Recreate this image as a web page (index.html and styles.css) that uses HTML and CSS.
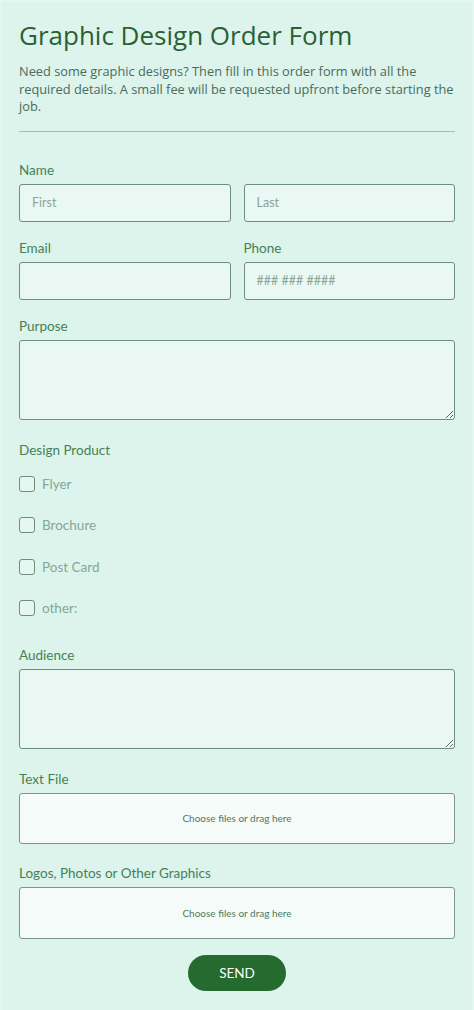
FILE: index.html
```html
<!DOCTYPE html>
<html>
<head>
  <title>Graphic Design Order Form</title>
  <link rel="stylesheet" href="styles.css">
</head>
<body>
  <div class="container">
    <h1>Graphic Design Order Form</h1>
    <p class="intro">Need some graphic designs? Then fill in this order form with all the required details. A small fee will be requested upfront before starting the job.</p>
    <hr class="divider">

    <div class="form-group">
      <label>Name</label>
      <div class="row">
        <input type="text" placeholder="First">
        <input type="text" placeholder="Last">
      </div>
    </div>

    <div class="row">
      <div class="form-group">
        <label for="email">Email</label>
        <input type="email" id="email">
      </div>
      <div class="form-group">
        <label for="phone">Phone</label>
        <input type="tel" id="phone" placeholder="### ### ####">
      </div>
    </div>

    <div class="form-group area-group">
      <label for="purpose">Purpose</label>
      <textarea id="purpose"></textarea>
    </div>

    <div class="form-group">
      <label>Design Product</label>
      <div class="options">
        <div class="option"><span class="box"></span>Flyer</div>
        <div class="option"><span class="box"></span>Brochure</div>
        <div class="option"><span class="box"></span>Post Card</div>
        <div class="option"><span class="box"></span>other:</div>
      </div>
    </div>

    <div class="form-group area-group">
      <label for="audience">Audience</label>
      <textarea id="audience"></textarea>
    </div>

    <div class="form-group file-group">
      <label>Text File</label>
      <div class="upload">Choose files or drag here</div>
    </div>

    <div class="form-group file-group">
      <label>Logos, Photos or Other Graphics</label>
      <div class="upload tall">Choose files or drag here</div>
    </div>

    <div class="actions">
      <button class="button">SEND</button>
    </div>
  </div>
</body>
</html>
```

FILE: styles.css
```css
body {
  margin: 0;
  padding: 0;
  background-color: #dcf4ec;
  font-family: Lato, "Open Sans", sans-serif;
}

.container {
  padding: 17px 19px 20px;
  min-height: 100vh;
  box-sizing: border-box;
  box-shadow: inset 2px 0 0 #e3f7f1, inset -2px 0 0 #e3f7f1, inset 0 2px 0 #e3f7f1;
}

h1 {
  font-family: "Open Sans", sans-serif;
  font-weight: 400;
  font-size: 26px;
  line-height: 36px;
  color: #2b5f36;
  margin: 0 0 10px;
}

.intro {
  font-family: "Open Sans", sans-serif;
  font-size: 12.8px;
  line-height: 17.5px;
  color: #4b6b5b;
  margin: 0 0 15px;
}

.divider {
  border: none;
  border-top: 1px solid #a7bdb4;
  margin: 0 0 30px;
}

.form-group {
  margin-bottom: 18px;
}

.area-group {
  margin-bottom: 22px;
}

.file-group {
  margin-bottom: 21px;
}

.row {
  display: flex;
  gap: 13px;
}

.row > * {
  flex: 1;
  min-width: 0;
}

.form-group label {
  display: block;
  font-size: 13.5px;
  line-height: 16px;
  color: #468154;
  margin-bottom: 6px;
}

input, textarea {
  display: block;
  width: 100%;
  box-sizing: border-box;
  height: 38px;
  padding: 0 12px;
  border: 1px solid #6d8d7d;
  border-radius: 3px;
  background-color: #eaf8f3;
  font-family: Lato, sans-serif;
  font-size: 12.5px;
  color: #3d5a4a;
}

input::placeholder {
  color: #8aa696;
}

textarea {
  height: 80px;
}

.options {
  display: flex;
  flex-direction: column;
  margin-top: 4px;
  margin-bottom: 2px;
}

.option {
  display: flex;
  align-items: center;
  height: 41.3px;
  font-size: 13.5px;
  color: #84a796;
}

.box {
  width: 16px;
  height: 16px;
  box-sizing: border-box;
  border: 1.5px solid #6d8d7d;
  border-radius: 3px;
  background-color: #e6f7f1;
  margin-right: 7px;
}

.upload {
  height: 51px;
  box-sizing: border-box;
  border: 1px solid #7c9789;
  border-radius: 3px;
  background-color: #f5fbf9;
  display: flex;
  align-items: center;
  justify-content: center;
  font-size: 10px;
  color: #4e7a5c;
}

.upload.tall {
  height: 52px;
}

.actions {
  display: flex;
  justify-content: center;
  margin-top: -5px;
}

.button {
  width: 98px;
  height: 36px;
  border: none;
  border-radius: 18px;
  background-color: #256a2f;
  color: white;
  font-family: Lato, sans-serif;
  font-size: 13.5px;
  cursor: pointer;
}
```
